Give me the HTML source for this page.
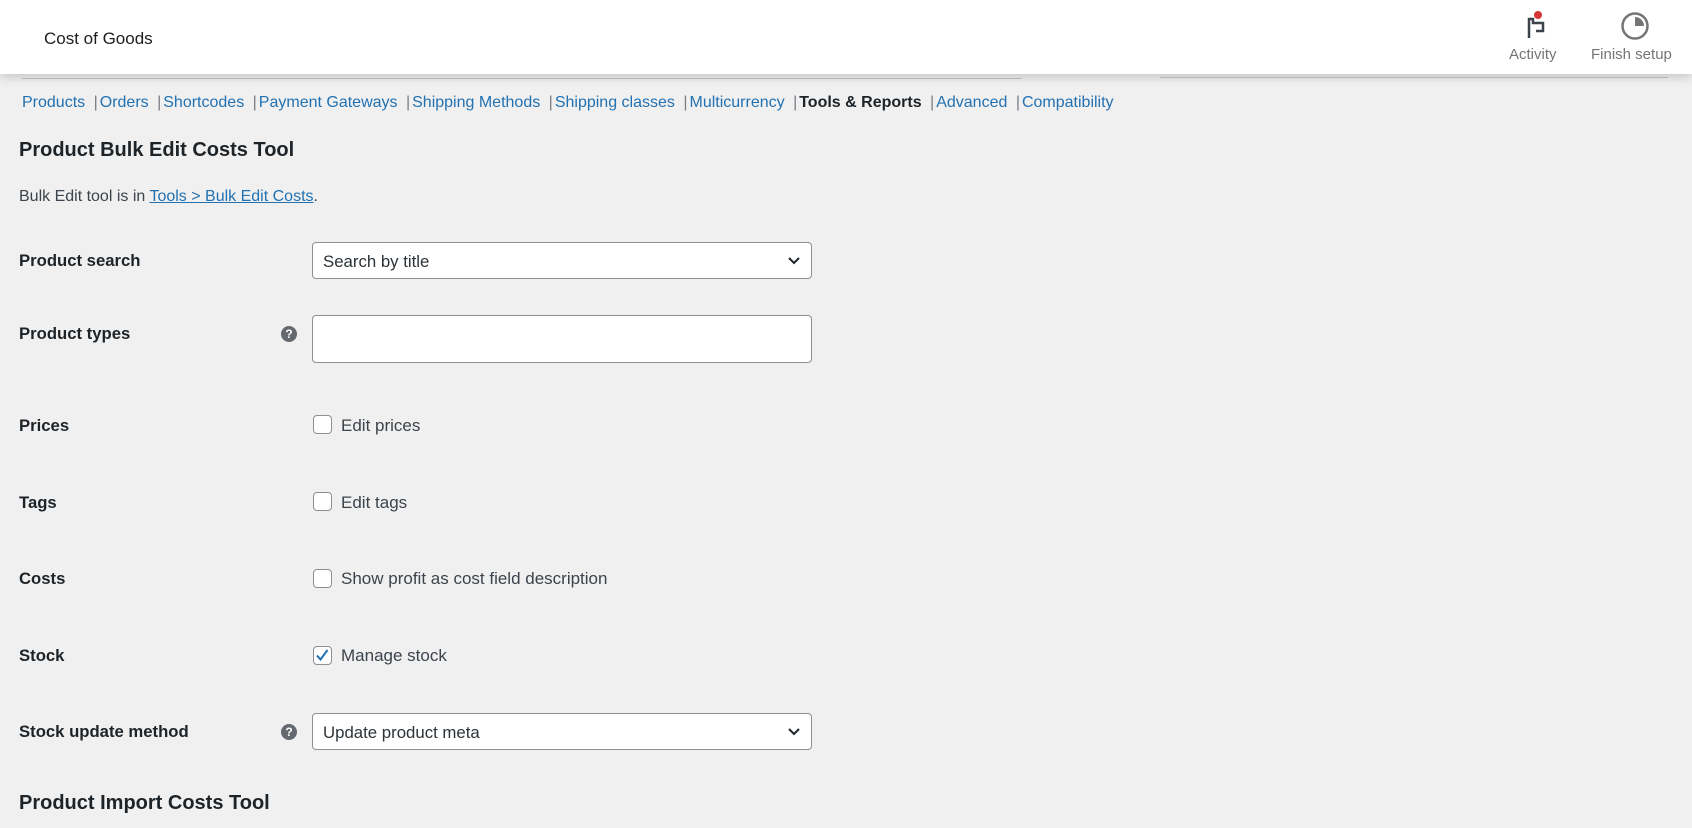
<!DOCTYPE html>
<html><head><meta charset="utf-8"><style>
body{margin:0;width:1692px;height:828px;background:#f0f0f1;font-family:"Liberation Sans",sans-serif;color:#1d2327;position:relative;overflow:hidden}
.abs{position:absolute;white-space:nowrap}
.hdr{position:absolute;left:0;top:0;width:1692px;height:74px;background:#fff;box-shadow:0 3px 10px rgba(0,0,0,.18);z-index:2}
.nav{left:22px;top:94px;font-size:16px;color:#2271b1}
.nav b{color:#1d2327;font-weight:600}
.nav i{font-style:normal;color:#787c82;margin:0 2px 0 4px}
.lbl{left:19px;font-size:16.7px;font-weight:600}
.box{position:absolute;left:312px;width:500px;background:#fff;border:1px solid #8c8f94;border-radius:4px;box-sizing:border-box}
.sel{height:37px;font-size:16.8px;color:#2c3338;padding:9px 10px 7px}
.cb{position:absolute;left:313px;width:19px;height:19px;border:1px solid #8c8f94;border-radius:4px;background:#fff;box-sizing:border-box}
.ct{left:341px;font-size:17px;color:#3c434a}
.help{position:absolute;left:281px;width:16px;height:16px;border-radius:50%;background:#646970;color:#fff;font-size:12px;font-weight:bold;text-align:center;line-height:16px}
</style></head><body>
<div class="hdr">
<div class="abs" style="left:44px;top:29px;font-size:17px;color:#1e1e1e">Cost of Goods</div>
<svg class="abs" style="left:1525px;top:10px" width="26" height="30" viewBox="0 0 26 30"><path d="M4 28V9h4v4h10V21H11" fill="none" stroke="#3c434a" stroke-width="2.5"/><circle cx="13" cy="5" r="4" fill="#d63638"/></svg>
<div class="abs" style="left:1509px;top:46px;font-size:15px;color:#757575">Activity</div>
<svg class="abs" style="left:1620px;top:11px" width="30" height="30" viewBox="0 0 30 30"><circle cx="15" cy="15" r="12.5" fill="none" stroke="#757575" stroke-width="2.5"/><path d="M15 6A9 9 0 0 1 24 15H15Z" fill="#757575"/></svg>
<div class="abs" style="left:1591px;top:46px;font-size:15px;color:#757575">Finish setup</div>
</div>
<div class="abs" style="left:22px;top:74px;width:1000px;height:4px;border-bottom:1px solid #c3c4c7"></div>
<div class="abs" style="left:1160px;top:74px;width:508px;height:3px;border-bottom:1px solid #c3c4c7"></div>
<div class="abs nav">Products <i>|</i>Orders <i>|</i>Shortcodes <i>|</i>Payment Gateways <i>|</i>Shipping Methods <i>|</i>Shipping classes <i>|</i>Multicurrency <i>|</i><b>Tools &amp; Reports</b> <i>|</i>Advanced <i>|</i>Compatibility</div>
<div class="abs" style="left:19px;top:139px;font-size:20px;font-weight:600">Product Bulk Edit Costs Tool</div>
<div class="abs" style="left:19px;top:188px;font-size:16px;color:#3c434a">Bulk Edit tool is in <span style="color:#2271b1;text-decoration:underline">Tools &gt; Bulk Edit Costs</span>.</div>
<div class="abs lbl" style="top:251px">Product search</div>
<div class="box sel" style="top:242px">Search by title<svg style="position:absolute;right:10px;top:13px" width="14" height="10"><path d="M2 2l5 5 5-5" fill="none" stroke="#1d2327" stroke-width="2"/></svg></div>
<div class="abs lbl" style="top:324px">Product types</div>
<div class="help" style="top:326px">?</div>
<div class="box" style="top:315px;height:48px"></div>
<div class="abs lbl" style="top:416px">Prices</div>
<div class="cb" style="top:415px"></div><div class="abs ct" style="top:416px">Edit prices</div>
<div class="abs lbl" style="top:493px">Tags</div>
<div class="cb" style="top:492px"></div><div class="abs ct" style="top:493px">Edit tags</div>
<div class="abs lbl" style="top:569px">Costs</div>
<div class="cb" style="top:569px"></div><div class="abs ct" style="top:569px">Show profit as cost field description</div>
<div class="abs lbl" style="top:646px">Stock</div>
<div class="cb" style="top:646px"><svg width="17" height="17" style="position:absolute;left:0;top:0"><path d="M3 8.5l3.5 4L13.5 3" fill="none" stroke="#2271b1" stroke-width="2"/></svg></div><div class="abs ct" style="top:646px">Manage stock</div>
<div class="abs lbl" style="top:722px">Stock update method</div>
<div class="help" style="top:724px">?</div>
<div class="box sel" style="top:713px">Update product meta<svg style="position:absolute;right:10px;top:13px" width="14" height="10"><path d="M2 2l5 5 5-5" fill="none" stroke="#1d2327" stroke-width="2"/></svg></div>
<div class="abs" style="left:19px;top:792px;font-size:20px;font-weight:600">Product Import Costs Tool</div>
</body></html>
